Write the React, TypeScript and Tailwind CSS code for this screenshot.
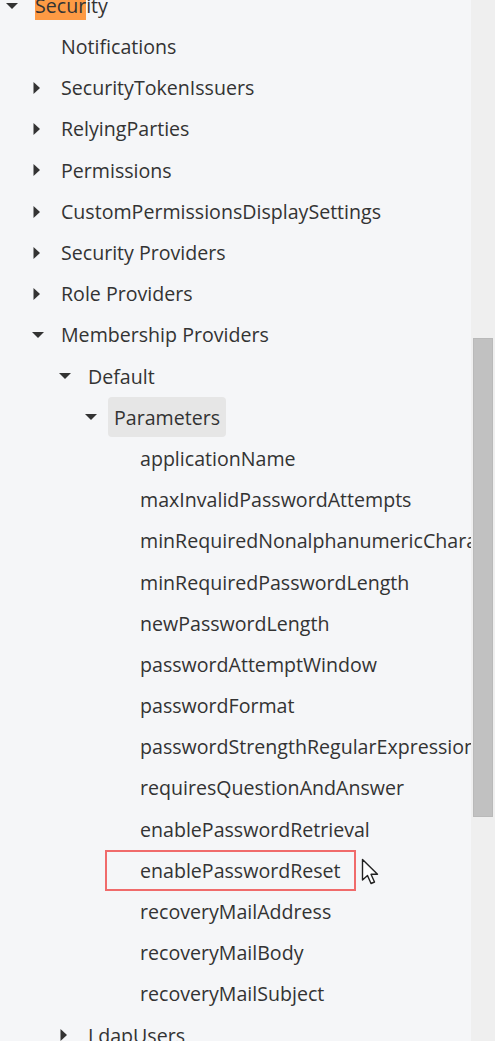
import { ReactNode } from 'react';

type Node = {
  label: ReactNode;
  level: number;
  caret?: 'open' | 'closed';
  selected?: boolean;
  marked?: boolean;
};

// left padding per depth, keeps the caret and label on a 26px step
const indent = ['pl-[6px]', 'pl-[32px]', 'pl-[59px]', 'pl-[85px]', 'pl-[111px]'];

const params = [
  'applicationName',
  'maxInvalidPasswordAttempts',
  'minRequiredNonalphanumericCharacters',
  'minRequiredPasswordLength',
  'newPasswordLength',
  'passwordAttemptWindow',
  'passwordFormat',
  'passwordStrengthRegularExpression',
  'requiresQuestionAndAnswer',
  'enablePasswordRetrieval',
  'enablePasswordReset',
  'recoveryMailAddress',
  'recoveryMailBody',
  'recoveryMailSubject',
];

const nodes: Node[] = [
  {
    label: (
      <>
        <span className="bg-[#fd9a44]">Secur</span>ity
      </>
    ),
    level: 0,
    caret: 'open',
  },
  { label: 'Notifications', level: 1 },
  { label: 'SecurityTokenIssuers', level: 1, caret: 'closed' },
  { label: 'RelyingParties', level: 1, caret: 'closed' },
  { label: 'Permissions', level: 1, caret: 'closed' },
  { label: 'CustomPermissionsDisplaySettings', level: 1, caret: 'closed' },
  { label: 'Security Providers', level: 1, caret: 'closed' },
  { label: 'Role Providers', level: 1, caret: 'closed' },
  { label: 'Membership Providers', level: 1, caret: 'open' },
  { label: 'Default', level: 2, caret: 'open' },
  { label: 'Parameters', level: 3, caret: 'open', selected: true },
  ...params.map((p) => ({ label: p, level: 4, marked: p === 'enablePasswordReset' })),
  { label: 'LdapUsers', level: 2, caret: 'closed' },
];

function Caret({ kind }: { kind?: 'open' | 'closed' }) {
  return (
    <span className="flex w-[23px] shrink-0 items-center">
      {kind === 'open' && (
        <svg width="12" height="12" viewBox="0 0 12 12">
          <polygon points="0,3 12,3 6,9" fill="#333" />
        </svg>
      )}
      {kind === 'closed' && (
        <svg width="12" height="12" viewBox="0 0 12 12" className="-ml-[1px]">
          <polygon points="2.5,0 9,6 2.5,12" fill="#333" />
        </svg>
      )}
    </span>
  );
}

function Pointer() {
  return (
    <svg width="20" height="30" viewBox="0 0 20 30" className="absolute left-[361px] top-[8px]">
      <path
        d="M1.5 1.5 L1.5 22 L6.5 17.5 L10 25.5 L13.5 24 L10 16.3 L16.5 16.3 Z"
        fill="#fff"
        stroke="#222"
        strokeWidth="1.4"
        strokeLinejoin="round"
      />
    </svg>
  );
}

function Row({ node }: { node: Node }) {
  if (node.marked) {
    return (
      <div className="relative flex h-[41.2px] items-center">
        <div className="ml-[105px] flex h-[41px] w-[251px] items-center border-2 border-[#f06b6b] pl-[33px]">
          {node.label}
        </div>
        <Pointer />
      </div>
    );
  }
  return (
    <div className={`flex h-[41.2px] items-center ${indent[node.level]}`}>
      <Caret kind={node.caret} />
      <span
        className={`flex h-[40px] items-center whitespace-nowrap rounded-[4px] px-[6px] ${
          node.selected ? 'bg-[#e6e6e6]' : ''
        }`}
      >
        {node.label}
      </span>
    </div>
  );
}

export default function App() {
  return (
    <div
      className="flex h-[1041px] w-[495px] overflow-hidden bg-[#f5f6f8] text-[19.6px] text-[#333]"
      style={{ fontFamily: '"Open Sans", "Noto Sans", sans-serif' }}
    >
      <div className="min-w-0 flex-1 overflow-hidden">
        <div className="-mt-[15px]">
          {nodes.map((n, i) => (
            <Row key={i} node={n} />
          ))}
        </div>
      </div>
      <div className="w-[24px] shrink-0 bg-[#efefef] pl-[2px] pt-[338px]">
        <div className="h-[479px] w-[20px] border border-[#b9b9b9] bg-[#c1c1c1]" />
      </div>
    </div>
  );
}
